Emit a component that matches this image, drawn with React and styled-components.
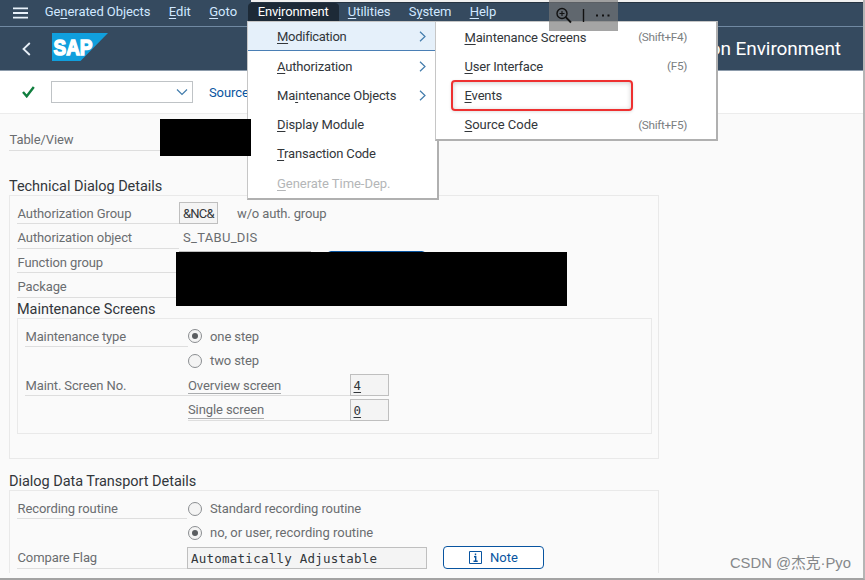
import React from 'react';
import styled, { createGlobalStyle } from 'styled-components';

const GlobalStyle = createGlobalStyle`
  * {
    box-sizing: border-box;
  }

  body {
    margin: 0;
    overflow: hidden;
    background: #fafafa;
    font-family: Roboto, 'Liberation Sans', sans-serif;
    font-size: 13px;
    color: #6a6d70;
  }

  u {
    text-decoration-thickness: 1px;
    text-underline-offset: 2px;
  }
`;

const Window = styled.div`
  position: relative;
  width: 865px;
  height: 580px;
  overflow: hidden;
  background: #fafafa;
  border-right: 2px solid #b5b5b5;
  border-bottom: 2px solid #a3a3a3;
`;

const MenuBar = styled.div`
  display: flex;
  align-items: center;
  height: 27px;
  padding: 0 0 2px 13px;
  background: #354a5f;
  border-bottom: 1px solid #7089a2;
`;

const MenuBarItem = styled.span`
  height: 20px;
  line-height: 18px;
  margin-top: 1px;
  margin-left: ${props => (props.$active ? 1.4 : 0)}px;
  padding: 0 ${props => (props.$active ? 10 : 9.2)}px;
  border-radius: 4px 4px 0 0;
  letter-spacing: ${props => props.$spacing || 0}px;
  color: ${props => (props.$active ? '#fff' : '#d1e8ff')};
  background: ${props => (props.$active ? '#1d2a37' : 'transparent')};
  white-space: nowrap;
`;

const Burger = styled.svg`
  margin: 1px 7.5px 0 0;
`;

const Header = styled.div`
  display: flex;
  align-items: center;
  height: 44px;
  padding: 0 22px 0 22px;
  background: #354a5f;
  border-bottom: 1px solid #8c9bab;
`;

const Logo = styled.svg`
  margin: -4px 0 0 21px;
`;

const PageTitle = styled.h1`
  margin: 0 0 0 auto;
  color: #fff;
  font-size: 19px;
  font-weight: 400;
  letter-spacing: -0.06px;
`;

const Toolbar = styled.div`
  display: flex;
  align-items: center;
  height: 43px;
  padding-left: 22px;
  background: #fff;
  border-bottom: 1px solid #ececec;
`;

const CommandField = styled.div`
  display: flex;
  align-items: center;
  justify-content: flex-end;
  width: 142px;
  height: 22px;
  margin: 0 16px 0 16px;
  padding-right: 4px;
  border: 1px solid #bfc3c6;
  background: #fff;
`;

const ToolbarLink = styled.span`
  color: #0854a0;
  letter-spacing: -0.1px;
`;

const Content = styled.div`
  padding: 12px 0 0 9px;
`;

const Row = styled.div`
  display: flex;
  align-items: stretch;
  height: 24.6px;
`;

const Label = styled.span`
  flex: none;
  width: ${props => props.$width}px;
  line-height: 27.6px;
  padding-left: 0.5px;
  letter-spacing: ${props => props.$spacing || -0.1}px;
  border-bottom: 1px solid ${props => (props.$plain ? 'transparent' : '#dedede')};
`;

const Text = styled.span`
  line-height: 27.6px;
  margin-left: ${props => props.$gap}px;
  letter-spacing: ${props => props.$spacing || -0.1}px;
`;

const SectionTitle = styled.h2`
  margin: ${props => props.$top || 0}px 0 0;
  height: ${props => props.$height}px;
  line-height: ${props => props.$line || 21}px;
  font-size: 14.5px;
  font-weight: 400;
  letter-spacing: -0.04px;
  color: #32363a;
`;

const Group = styled.div`
  width: ${props => props.$width}px;
  height: ${props => props.$height}px;
  padding: ${props => props.$top || 3.6}px 0 0 7px;
  border: 1px solid #e9e9e9;
  ${props => props.$open && 'border-bottom: none;'}
`;

const Field = styled.span`
  align-self: flex-end;
  flex: none;
  width: ${props => props.$width}px;
  height: 22px;
  line-height: 21px;
  padding-left: 3px;
  border: 1px solid #bfbfbf;
  background: #f4f4f4;
  color: #32363a;
  letter-spacing: ${props => props.$spacing || 0}px;
  font-family: ${props => (props.$mono ? "'DejaVu Sans Mono', monospace" : 'inherit')};
  font-size: ${props => (props.$mono ? 12.5 : 13)}px;
`;

const Radio = styled.span`
  align-self: center;
  flex: none;
  display: flex;
  align-items: center;
  justify-content: center;
  width: 14px;
  height: 14px;
  margin-top: 3px;
  margin-left: ${props => props.$gap || 0}px;
  border: 1px solid #8b8e91;
  border-radius: 50%;
  background: #f4f4f4;

  &::after {
    content: '';
    width: 6px;
    height: 6px;
    border-radius: 50%;
    background: ${props => (props.$checked ? '#5a5d60' : 'transparent')};
  }
`;

const SubLabel = styled.span`
  flex: none;
  width: 161.5px;
  line-height: 27.6px;
  border-bottom: 1px solid #dedede;
  letter-spacing: -0.1px;

  span {
    display: inline-block;
    height: 22.4px;
    border-bottom: 1px solid #aaacae;
  }
`;

const Button = styled.button`
  display: flex;
  align-items: center;
  justify-content: center;
  gap: 8px;
  align-self: flex-end;
  width: ${props => props.$width}px;
  height: ${props => props.$height || 23}px;
  margin-left: 16px;
  padding: 0;
  border: 1px solid #0854a0;
  border-radius: 4px;
  background: #fff;
  color: #0854a0;
  font: inherit;
`;

const Menu = styled.div`
  position: absolute;
  left: ${props => props.$left}px;
  top: ${props => props.$top}px;
  width: ${props => props.$width}px;
  height: ${props => props.$height}px;
  background: #fff;
  border: 1px solid #c6c6c6;
  border-right: 2px solid #b0b0b0;
  border-bottom: 2px solid #b0b0b0;
`;

const MenuItem = styled.div`
  display: flex;
  align-items: center;
  justify-content: space-between;
  height: 29.2px;
  padding: 1px ${props => props.$right || 11}px 0 ${props => props.$left || 29}px;
  letter-spacing: ${props => props.$spacing || -0.16}px;
  color: ${props => (props.$disabled ? '#b4b6b8' : '#32363a')};
  ${props => props.$active && `
    background: #e5f0fa;
    border-bottom: 1px solid #4a7fb5;
  `}
`;

const Shortcut = styled.span`
  font-size: 11.8px;
  letter-spacing: -0.35px;
  color: #7b7e81;
`;

const Highlight = styled.div`
  position: absolute;
  left: 451px;
  top: 80px;
  width: 182px;
  height: 31px;
  border: 2px solid #ee3030;
  border-radius: 4px;
  box-shadow: inset 0 1px 5px rgba(0, 0, 0, 0.2), 0 1px 3px rgba(0, 0, 0, 0.12);
`;

const ViewerTools = styled.div`
  position: absolute;
  left: 549px;
  top: 0;
  width: 69px;
  height: 31px;
  background: rgba(118, 118, 118, 0.66);
`;

const TopStrip = styled.div`
  position: absolute;
  left: 251px;
  top: 0;
  right: 0;
  height: 3px;
  background: #f0f0f0;
  border-bottom: 1px solid #263442;
`;

const Redaction = styled.div`
  position: absolute;
  left: ${props => props.$left}px;
  top: ${props => props.$top}px;
  width: ${props => props.$width}px;
  height: ${props => props.$height}px;
  background: #000;
`;

const Watermark = styled.div`
  position: absolute;
  right: 12px;
  bottom: 5px;
  font-family: 'Liberation Sans', 'Noto Sans CJK SC', sans-serif;
  font-size: 14.8px;
  line-height: 20px;
  color: #85888a;
  white-space: nowrap;
`;

const menuBarItems = [
  { text: 'Generated Objects', key: 2, spacing: -0.06 },
  { text: 'Edit', key: 0 },
  { text: 'Goto', key: 0 },
  { text: 'Environment', key: 3, active: true, spacing: -0.15 },
  { text: 'Utilities', key: 0, spacing: -0.06 },
  { text: 'System', key: 1, spacing: -0.12 },
  { text: 'Help', key: 0 },
];

const environmentItems = [
  { text: 'Modification', key: 0, arrow: true, active: true, spacing: -0.28 },
  { text: 'Authorization', key: 0, arrow: true, spacing: -0.18 },
  { text: 'Maintenance Objects', key: 2, arrow: true, spacing: -0.16 },
  { text: 'Display Module', key: 0, spacing: -0.1 },
  { text: 'Transaction Code', key: 0, spacing: -0.18 },
  { text: 'Generate Time-Dep.', key: 0, disabled: true, spacing: -0.04 },
];

const modificationItems = [
  { text: 'Maintenance Screens', key: 0, shortcut: '(Shift+F4)' },
  { text: 'User Interface', key: 0, shortcut: '(F5)', spacing: -0.2 },
  { text: 'Events', key: 0 },
  { text: 'Source Code', key: 0, shortcut: '(Shift+F5)', spacing: -0.02 },
];

// underlines the access key of a menu text
function KeyText({ text, index }) {
  return (
    <span>
      {text.slice(0, index)}
      <u>{text[index]}</u>
      {text.slice(index + 1)}
    </span>
  );
}

function Arrow() {
  return (
    <svg width="7" height="11" viewBox="0 0 7 11" fill="none" stroke="#427cac" strokeWidth="1.2">
      <path d="M1 0.7 L6 5.5 L1 10.3" />
    </svg>
  );
}

function App() {
  return (
    <>
      <GlobalStyle />
      <Window>
        <MenuBar>
          <Burger width="15" height="12" stroke="#e8f1fa" strokeWidth="1.8">
            <path d="M0 1.3h15M0 6h15M0 10.7h15" />
          </Burger>
          {menuBarItems.map(item => (
            <MenuBarItem key={item.text} $active={item.active} $spacing={item.spacing}>
              <KeyText text={item.text} index={item.key} />
            </MenuBarItem>
          ))}
        </MenuBar>

        <Header>
          <svg width="9" height="14" fill="none" stroke="#e6eef6" strokeWidth="1.8">
            <path d="M7.8 1 L1.5 7 L7.8 13" />
          </svg>
          <Logo width="56" height="28" viewBox="0 0 56 28">
            <path d="M0 0h56L28.500 28H0z" fill="#109fdd" />
            <text
              x="1.5"
              y="21.5"
              textLength="39"
              lengthAdjust="spacingAndGlyphs"
              fontFamily="Liberation Sans, sans-serif"
              fontSize="22.5"
              fontWeight="700"
              fill="#fff"
              stroke="#fff"
              strokeWidth="1.5"
            >
              SAP
            </text>
          </Logo>
          <PageTitle>on Environment</PageTitle>
        </Header>

        <Toolbar>
          <svg width="13" height="12" fill="none" stroke="#107e3e" strokeWidth="2.4">
            <path d="M1 6 L4.700 10.300 L11.800 1" />
          </svg>
          <CommandField>
            <svg width="12" height="8" fill="none" stroke="#427cac" strokeWidth="1.200">
              <path d="M1 1.500 L6 6.500 L11 1.500" />
            </svg>
          </CommandField>
          <ToolbarLink>Source</ToolbarLink>
        </Toolbar>

        <Content>
          <Row>
            <Label $width={152}>Table/View</Label>
          </Row>

          <SectionTitle $top={25} $height={19}>Technical Dialog Details</SectionTitle>
          <Group $width={650} $height={264} $top={4}>
            <Row>
              <Label $width={162}>Authorization Group</Label>
              <Field $width={39} $spacing={-0.75}>&amp;NC&amp;</Field>
              <Text $gap={19} $spacing={-0.14}>w/o auth. group</Text>
            </Row>
            <Row>
              <Label $width={162}>Authorization object</Label>
              <Text $gap={4} $spacing={0.3}>S_TABU_DIS</Text>
            </Row>
            <Row>
              <Label $width={162}>Function group</Label>
              <Field $width={132} />
              <Button $width={99} $height={22} />
            </Row>
            <Row>
              <Label $width={162}>Package</Label>
            </Row>
            <SectionTitle $height={20} $line={23}>Maintenance Screens</SectionTitle>
            <Group $width={635} $height={116}>
              <Row>
                <Label $width={163} $spacing={-0.15}>Maintenance type</Label>
                <Radio $checked />
                <Text $gap={8}>one step</Text>
              </Row>
              <Row>
                <Label $width={163} $plain />
                <Radio />
                <Text $gap={8}>two step</Text>
              </Row>
              <Row>
                <Label $width={163} $spacing={-0.12}>Maint. Screen No.</Label>
                <SubLabel><span>Overview screen</span></SubLabel>
                <Field $width={39} $mono><u>4</u></Field>
              </Row>
              <Row>
                <Label $width={163} $plain />
                <SubLabel><span>Single screen</span></SubLabel>
                <Field $width={39} $mono><u>0</u></Field>
              </Row>
            </Group>
          </Group>

          <SectionTitle $top={12.6} $height={19}>Dialog Data Transport Details</SectionTitle>
          <Group $width={650} $height={83} $open>
            <Row>
              <Label $width={170}>Recording routine</Label>
              <Radio $gap={1} />
              <Text $gap={8}>Standard recording routine</Text>
            </Row>
            <Row>
              <Label $width={170} $plain />
              <Radio $gap={1} $checked />
              <Text $gap={8} $spacing={-0.02}>no, or user, recording routine</Text>
            </Row>
            <Row>
              <Label $width={170}>Compare Flag</Label>
              <Field $width={240} $mono $spacing={0.24}>Automatically Adjustable</Field>
              <Button $width={101}>
                <svg width="13" height="13" fill="none" stroke="#0854a0" strokeWidth="1">
                  <path d="M0.500 0.500h12v12h-12z" />
                  <path d="M6.500 2.500v1.800M5 5.800h1.700v4.200M4.500 10.200h4.200" strokeWidth="1.400" />
                </svg>
                Note
              </Button>
            </Row>
          </Group>
        </Content>

        <Menu $left={247} $top={21} $width={192} $height={179}>
          {environmentItems.map(item => (
            <MenuItem
              key={item.text}
              $active={item.active}
              $disabled={item.disabled}
              $spacing={item.spacing}
            >
              <KeyText text={item.text} index={item.key} />
              {item.arrow && <Arrow />}
            </MenuItem>
          ))}
        </Menu>
        <Menu $left={435} $top={21} $width={283} $height={120}>
          {modificationItems.map(item => (
            <MenuItem key={item.text} $left={28.5} $right={29} $spacing={item.spacing}>
              <KeyText text={item.text} index={item.key} />
              {item.shortcut && <Shortcut>{item.shortcut}</Shortcut>}
            </MenuItem>
          ))}
        </Menu>
        <Highlight />

        <TopStrip />
        <ViewerTools>
          <svg width="69" height="31" fill="none" stroke="#111" strokeWidth="1.400">
            <circle cx="13" cy="13.500" r="5" />
            <path d="M16.700 17.200 L22 22.500" strokeWidth="1.800" />
            <path d="M10.500 13.500h5M13 11v5" strokeWidth="1.100" />
            <path d="M34.500 9v13" />
            <path d="M47 15.500h2M53 15.500h2M58.500 15.500h2" strokeWidth="1.800" />
          </svg>
        </ViewerTools>

        <Redaction $left={160} $top={119} $width={91} $height={37} />
        <Redaction $left={175.5} $top={252} $width={391.5} $height={54} />
        <Watermark>CSDN @杰克·Pyo</Watermark>
      </Window>
    </>
  );
}

export default App;
